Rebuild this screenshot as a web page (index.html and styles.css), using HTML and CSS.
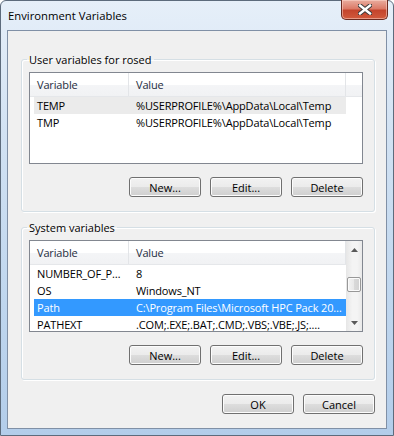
FILE: index.html
```html
<!DOCTYPE html>
<html lang="en">
<head>
  <meta charset="UTF-8" />
  <title>Environment Variables</title>
  <link rel="stylesheet" href="styles.css">
</head>
<body>

  <div class="window">
    <div class="titlebar">
      <span class="title">Environment Variables</span>
      <div class="close">
        <svg width="14" height="11" viewBox="0 0 14 11">
          <path d="M2 1.5 L12 9.5 M12 1.5 L2 9.5" stroke="#3b3b3b" stroke-width="4.4" stroke-linecap="square"/>
          <path d="M2 1.5 L12 9.5 M12 1.5 L2 9.5" stroke="#ffffff" stroke-width="2.4" stroke-linecap="square"/>
        </svg>
      </div>
    </div>

    <div class="client">
      <fieldset class="group">
        <legend>User variables for rosed</legend>
        <div class="list">
          <div class="list-head">
            <div class="col-var">Variable</div>
            <div class="col-val">Value</div>
            <div class="col-fill"></div>
          </div>
          <div class="list-body">
            <div class="row hot">
              <span class="col-var">TEMP</span>
              <span class="col-val">%USERPROFILE%\AppData\Local\Temp</span>
            </div>
            <div class="row">
              <span class="col-var">TMP</span>
              <span class="col-val">%USERPROFILE%\AppData\Local\Temp</span>
            </div>
          </div>
        </div>
        <div class="buttons">
          <button>New...</button>
          <button>Edit...</button>
          <button>Delete</button>
        </div>
      </fieldset>

      <fieldset class="group">
        <legend>System variables</legend>
        <div class="list with-scroll">
          <div class="list-main">
            <div class="list-head">
              <div class="col-var">Variable</div>
              <div class="col-val">Value</div>
            </div>
            <div class="list-body">
              <div class="row">
                <span class="col-var">NUMBER_OF_P…</span>
                <span class="col-val">8</span>
              </div>
              <div class="row">
                <span class="col-var">OS</span>
                <span class="col-val">Windows_NT</span>
              </div>
              <div class="row selected">
                <span class="col-var">Path</span>
                <span class="col-val">C:\Program Files\Microsoft HPC Pack 20…</span>
              </div>
              <div class="row">
                <span class="col-var">PATHEXT</span>
                <span class="col-val">.COM;.EXE;.BAT;.CMD;.VBS;.VBE;.JS;.…</span>
              </div>
            </div>
          </div>
          <div class="vscroll">
            <div class="arrow">
              <svg width="7" height="4" viewBox="0 0 7 4"><path d="M0 4 L3.5 0 L7 4 Z" fill="#5a5a5a"/></svg>
            </div>
            <div class="track">
              <div class="thumb"></div>
            </div>
            <div class="arrow">
              <svg width="7" height="4" viewBox="0 0 7 4"><path d="M0 0 L3.5 4 L7 0 Z" fill="#5a5a5a"/></svg>
            </div>
          </div>
        </div>
        <div class="buttons">
          <button>New...</button>
          <button>Edit...</button>
          <button>Delete</button>
        </div>
      </fieldset>

      <div class="buttons dialog-buttons">
        <button>OK</button>
        <button>Cancel</button>
      </div>
    </div>
  </div>

</body>
</html>
```

FILE: styles.css
```css
body {
  margin: 0;
  font-family: 'Open Sans', 'Noto Sans', sans-serif;
  font-size: 11px;
  color: #000;
  background: #ffffff;
}

.window {
  width: 394px;
  height: 436px;
  box-sizing: border-box;
  border: 1px solid #5d6b7c;
  border-radius: 6px 6px 0 0;
  background: linear-gradient(to bottom, #e6eff9 0%, #d2e2f3 30%, #bfd6ee 70%, #b3cdea 100%);
  display: flex;
  flex-direction: column;
}

.titlebar {
  height: 29px;
  display: flex;
  align-items: flex-start;
}

.title {
  padding: 7px 0 0 7px;
  font-size: 11.3px;
  line-height: 15px;
  color: #000;
}

.close {
  margin: -1px 5px 0 auto;
  width: 47px;
  height: 20px;
  box-sizing: border-box;
  border: 1px solid #6b2a20;
  border-top: none;
  border-radius: 0 0 5px 5px;
  background: linear-gradient(to bottom, #e9ad9f 0%, #dc7b68 45%, #c4442c 55%, #d25a3c 100%);
  box-shadow: inset 0 0 0 1px rgba(255, 220, 210, 0.5);
  display: flex;
  align-items: center;
  justify-content: center;
}

.client {
  margin: 0 6px;
  height: 399px;
  box-sizing: border-box;
  border: 1px solid #8090a6;
  background: #f0f0f0;
  padding: 21px 0 0 13px;
}

.group {
  width: 354px;
  box-sizing: border-box;
  margin: 0 0 8px 0;
  padding: 5px 11px 14px 7px;
  border: 1px solid #d5dfe5;
  border-radius: 3px;
  box-shadow: inset 1px 1px 0 #ffffff, 1px 1px 0 #ffffff;
}

.group legend {
  margin-left: -2px;
  padding: 0 2px;
  font-size: 11px;
  line-height: 15px;
}

.list {
  height: 92px;
  box-sizing: border-box;
  border: 1px solid #828790;
  background: #ffffff;
  overflow: hidden;
  letter-spacing: -0.15px;
}

.list-head {
  display: flex;
  height: 24px;
  background: linear-gradient(to bottom, #ffffff 0%, #ffffff 50%, #f4f5f7 51%, #f1f2f4 100%);
  border-bottom: 1px solid #e5e7ea;
  box-sizing: border-box;
  color: #1e2d40;
}

.list-head > div {
  line-height: 23px;
  padding-left: 7px;
  box-sizing: border-box;
  border-right: 1px solid #e3e5e8;
}

.list-head .col-var {
  width: 99px;
}

.list-head .col-val {
  width: 217px;
}

.list-head .col-fill {
  flex: 1;
  border-right: none;
}

.row {
  display: flex;
  height: 17px;
  line-height: 17px;
  margin-left: 4px;
  width: 312px;
  white-space: nowrap;
  overflow: hidden;
}

.row .col-var {
  width: 95px;
  padding-left: 3px;
  box-sizing: border-box;
  overflow: hidden;
}

.row .col-val {
  flex: 1;
  padding-left: 7px;
  overflow: hidden;
}

.row.hot {
  background: #ebebeb;
}

.row.selected {
  background: #3399ff;
  color: #ffffff;
}

.with-scroll {
  display: flex;
}

.list-main {
  width: 316px;
}

.vscroll {
  flex: 1;
  display: flex;
  flex-direction: column;
  background: linear-gradient(to right, #e6e6e6, #f4f4f4 40%, #f4f4f4 70%, #e9e9e9);
}

.arrow {
  height: 17px;
  display: flex;
  align-items: center;
  justify-content: center;
}

.track {
  flex: 1;
  padding: 19px 1px 0 1px;
}

.thumb {
  height: 15px;
  box-sizing: border-box;
  border: 1px solid #989898;
  border-radius: 2px;
  background: linear-gradient(to right, #f3f3f3, #e8e8e8 50%, #d9d9d9 51%, #d2d2d2);
  box-shadow: inset 0 0 0 1px #fbfbfb;
}

.buttons {
  display: flex;
  justify-content: flex-end;
  gap: 9px;
  margin-top: 13px;
}

.buttons button {
  width: 72px;
  height: 20px;
  padding: 0;
  font-family: inherit;
  font-size: 11px;
  color: #000;
  border: 1px solid #707070;
  border-radius: 3px;
  background: linear-gradient(to bottom, #f2f2f2 0%, #ebebeb 50%, #dddddd 51%, #cfcfcf 100%);
  box-shadow: inset 0 0 0 1px #fcfcfc;
}

.dialog-buttons {
  width: 354px;
  margin-top: 14px;
}
```
